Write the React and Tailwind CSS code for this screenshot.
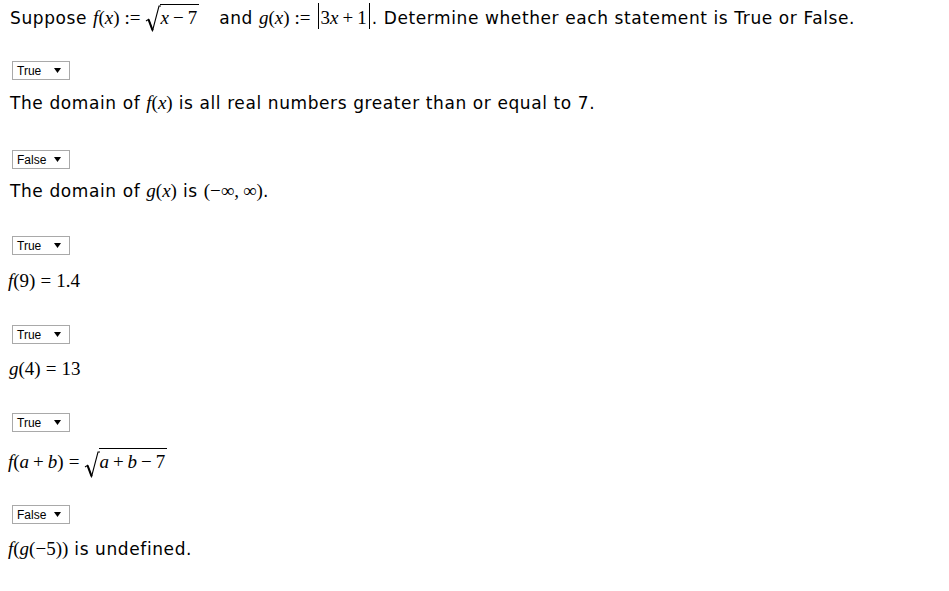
import React from "react";

const SANS = "font-['DejaVu_Sans','Verdana',sans-serif]";

function M({ children, className = "" }) {
  return (
    <span className={`font-['Liberation_Serif','Times_New_Roman',serif] text-[19px] tracking-normal ${className}`}>
      {children}
    </span>
  );
}

function I({ children }) {
  return <span className="italic">{children}</span>;
}

function Rel({ children }) {
  return <span className="mx-[5px]">{children}</span>;
}

function Bin({ children }) {
  return <span className="mx-[4px]">{children}</span>;
}

function Sqrt({ children }) {
  return (
    <span className="relative inline-block pl-[15px]">
      <svg
        className="absolute left-0 bottom-[-4px]"
        width="16"
        height="27"
        viewBox="0 0 16 27"
        fill="none"
      >
        <path d="M1 16 L3.6 14.4 L7.6 25.5 L14 1 L16 1" stroke="#000" strokeWidth="1.1" strokeLinejoin="miter" />
        <path d="M3.6 14.6 L7.6 25.3" stroke="#000" strokeWidth="2" />
      </svg>
      <span className="inline-block border-t border-black leading-[19px] pt-[3px] pr-[2px]">{children}</span>
    </span>
  );
}

function Bar() {
  return <span className="inline-block w-[1px] h-[26px] bg-black align-[-5px] mx-[2px]" />;
}

function Sel({ value }) {
  return (
    <div className="ml-[12px] w-[58px] h-[19px] border border-[#a9a9a9] bg-white flex items-center justify-between pl-[4px] pr-[8px] font-['Liberation_Sans','Arial',sans-serif] text-[12px] leading-none tracking-normal text-black">
      <span>{value}</span>
      <svg width="7" height="5" viewBox="0 0 7 5">
        <path d="M0 0 H7 L3.5 5 Z" fill="#000" />
      </svg>
    </div>
  );
}

export default function App() {
  return (
    <div className={`w-[949px] h-[591px] bg-white text-black ${SANS} text-[17px] tracking-[0.6px] flex flex-col`}>
      <div className="mt-[3px] h-[20px] leading-[20px] pl-[10px] whitespace-nowrap">
        Suppose{" "}
        <M>
          <I>f</I>(<I>x</I>)<Rel>:=</Rel>
          <Sqrt>
            <I>x</I>
            <Bin>−</Bin>7
          </Sqrt>
        </M>
        <span className="inline-block w-[20px]" />
        and{" "}
        <M>
          <I>g</I>(<I>x</I>)<Rel>:=</Rel>
          <Bar />
          3<I>x</I>
          <Bin>+</Bin>1
          <Bar />
        </M>
        . Determine whether each statement is True or False.
      </div>

      <div className="mt-[38px]">
        <Sel value="True" />
      </div>
      <div className="mt-[13px] h-[20px] leading-[20px] pl-[10px] whitespace-nowrap">
        The domain of{" "}
        <M>
          <I>f</I>(<I>x</I>)
        </M>{" "}
        is all real numbers greater than or equal to 7.
      </div>

      <div className="mt-[37px]">
        <Sel value="False" />
      </div>
      <div className="mt-[12px] h-[20px] leading-[20px] pl-[10px] whitespace-nowrap">
        The domain of{" "}
        <M>
          <I>g</I>(<I>x</I>)
        </M>{" "}
        is{" "}
        <M>
          (−∞,<span className="ml-[4px]">∞</span>)
        </M>
        .
      </div>

      <div className="mt-[35px]">
        <Sel value="True" />
      </div>
      <div className="mt-[14px] h-[24px] leading-[24px] pl-[8px] whitespace-nowrap">
        <M>
          <I>f</I>(9)<Rel>=</Rel>1.4
        </M>
      </div>

      <div className="mt-[32px]">
        <Sel value="True" />
      </div>
      <div className="mt-[13px] h-[24px] leading-[24px] pl-[9px] whitespace-nowrap">
        <M>
          <I>g</I>(4)<Rel>=</Rel>13
        </M>
      </div>

      <div className="mt-[32px]">
        <Sel value="True" />
      </div>
      <div className="mt-[16px] h-[24px] leading-[24px] pl-[8px] whitespace-nowrap">
        <M>
          <I>f</I>(<I>a</I>
          <Bin>+</Bin>
          <I>b</I>)<Rel>=</Rel>
          <Sqrt>
            <I>a</I>
            <Bin>+</Bin>
            <I>b</I>
            <Bin>−</Bin>7
          </Sqrt>
        </M>
      </div>

      <div className="mt-[33px]">
        <Sel value="False" />
      </div>
      <div className="mt-[15px] h-[20px] leading-[20px] pl-[8px] whitespace-nowrap">
        <M>
          <I>f</I>(<I>g</I>(−5))
        </M>{" "}
        is undefined.
      </div>
    </div>
  );
}
